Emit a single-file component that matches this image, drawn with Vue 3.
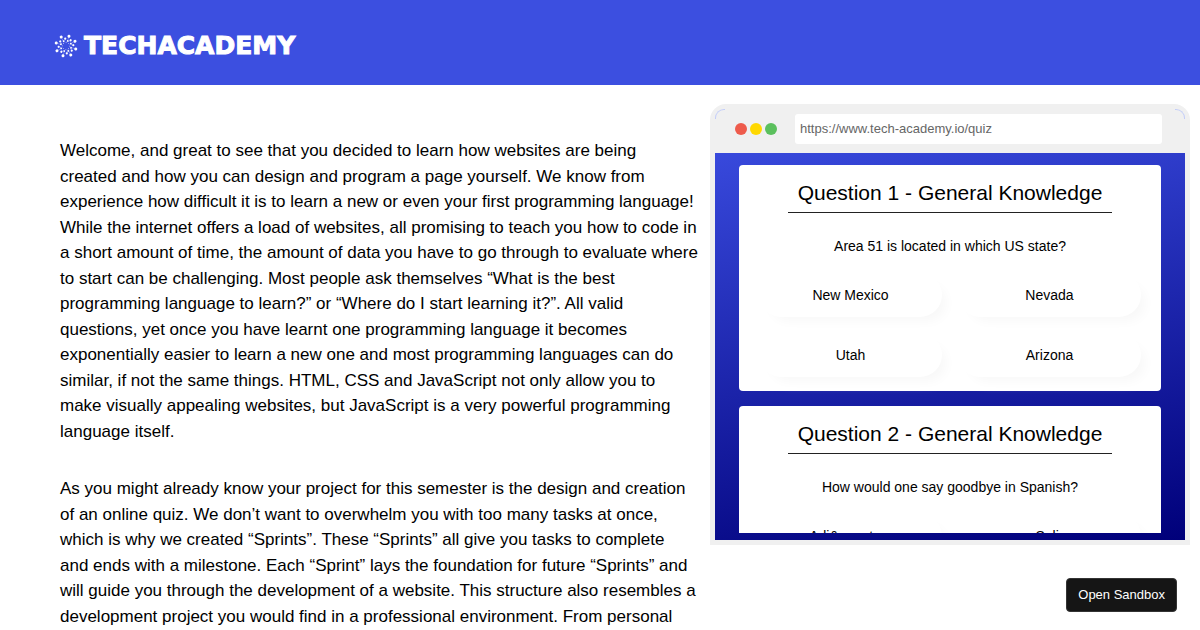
<template>
  <div class="page">
    <header class="topbar">
      <a class="logo" href="#" aria-label="TechAcademy">
        <svg class="logo-mark" viewBox="-12 -12 24 24" aria-hidden="true">
          <g v-for="n in 8" :key="n" :transform="`rotate(${n * 45 + 17})`">
            <path d="M0 -4V-9.6M-2.8 -4L-3 -7" />
            <circle cx="0" cy="-10.2" r="1.5" />
            <circle cx="-2.9" cy="-6.8" r="1.1" />
            <circle cx="0.2" cy="-5.4" r="0.9" />
            <circle cx="-1" cy="-3.6" r="0.4" />
          </g>
        </svg>
        <span class="logo-text">TECHACADEMY</span>
      </a>
    </header>

    <main class="content">
      <article class="intro">
        <p v-for="(text, index) in paragraphs" :key="index">{{ text }}</p>
      </article>

      <section class="browser">
        <div class="browser-bar">
          <div class="dots">
            <span class="dot red"></span>
            <span class="dot yellow"></span>
            <span class="dot green"></span>
          </div>
          <input v-model="url" class="address" type="text" aria-label="Address" />
        </div>
        <div class="screen">
          <div class="quiz">
            <div class="card" v-for="question in questions" :key="question.title">
              <h2>{{ question.title }}</h2>
              <p class="question">{{ question.text }}</p>
              <div class="answers">
                <button v-for="answer in question.answers" :key="answer" type="button">{{ answer }}</button>
              </div>
            </div>
          </div>
        </div>
      </section>
    </main>

    <button class="sandbox" type="button">Open Sandbox</button>
  </div>
</template>

<script setup>
import { ref } from 'vue'

const url = ref('https://www.tech-academy.io/quiz')

const paragraphs = [
  'Welcome, and great to see that you decided to learn how websites are being\ncreated and how you can design and program a page yourself. We know from experience how difficult it is to learn a new or even your first programming language! While the internet offers a load of websites, all promising to teach you how to code in a short amount of time, the amount of data you have to go through to evaluate where to start can be challenging. Most people ask themselves “What is the best programming language to learn?” or “Where do I start learning it?”. All valid questions, yet once you have learnt one programming language it becomes exponentially easier to learn a new one and most programming languages can do similar, if not the same things. HTML, CSS and JavaScript not only allow you to\nmake visually appealing websites, but JavaScript is a very powerful programming language itself.',
  'As you might already know your project for this semester is the design and creation of an online quiz. We don’t want to overwhelm you with too many tasks at once, which is why we created “Sprints”. These “Sprints” all give you tasks to complete\nand ends with a milestone. Each “Sprint” lays the foundation for future “Sprints” and will guide you through the development of a website. This structure also resembles a development project you would find in a professional environment. From personal'
]

const questions = [
  {
    title: 'Question 1 - General Knowledge',
    text: 'Area 51 is located in which US state?',
    answers: ['New Mexico', 'Nevada', 'Utah', 'Arizona']
  },
  {
    title: 'Question 2 - General Knowledge',
    text: 'How would one say goodbye in Spanish?',
    answers: ['Adi&oacute;s', 'Salir']
  }
]
</script>

<style>
body {
  margin: 0;
  background: #fff;
}
</style>

<style scoped>
.page {
  height: 100vh;
  overflow: hidden;
  color: #000;
  font-family: "Liberation Sans", Helvetica, Arial, sans-serif;
}
.page * {
  box-sizing: border-box;
}
.topbar {
  display: flex;
  align-items: center;
  height: 85px;
  padding: 6px 54px 0;
  background: #3c4fe0;
}
.logo {
  display: flex;
  align-items: center;
  gap: 6px;
  color: #fff;
  text-decoration: none;
}
.logo-mark {
  width: 24px;
  height: 24px;
  fill: #fff;
}
.logo-mark path {
  fill: none;
  stroke: #fff;
  stroke-width: 0.5;
  opacity: 0.5;
}
.logo-text {
  font-family: "DejaVu Sans", sans-serif;
  font-size: 25px;
  font-weight: bold;
  line-height: 32px;
  -webkit-text-stroke: 1px #fff;
}
.content {
  display: flex;
  align-items: flex-start;
}
.intro {
  flex: 1;
  min-width: 0;
  padding: 53px 10px 0 60px;
  font-size: 17px;
  line-height: 1.5;
}
.intro p {
  margin: 0 0 32px;
  white-space: pre-line;
}
.browser {
  position: relative;
  width: 40%;
  margin: 19px 10px 0 0;
  border: 5px solid #f0f0f0;
  border-radius: 16px 16px 0 0;
  background: #f0f0f0;
}
.browser::before,
.browser::after {
  content: '';
  position: absolute;
  top: 0;
  width: 9px;
  height: 9px;
  border-top: 1px solid #c3cdf8;
}
.browser::before {
  left: 0;
  border-left: 1px solid #c3cdf8;
  border-top-left-radius: 9px;
}
.browser::after {
  right: 0;
  border-right: 1px solid #c3cdf8;
  border-top-right-radius: 9px;
}
.browser-bar {
  display: flex;
  align-items: center;
  gap: 18px;
  height: 44px;
  padding: 0 23px 4px 20px;
}
.dots {
  display: flex;
  gap: 3px;
}
.dot {
  width: 12px;
  height: 12px;
  border-radius: 50%;
}
.red {
  background: #ee5b4c;
}
.yellow {
  background: #ffd800;
}
.green {
  background: #5bc05d;
}
.address {
  flex: 1;
  min-width: 0;
  height: 30px;
  padding: 0 5px 2px;
  border: 0;
  border-radius: 3px;
  background: #fff;
  color: #666;
  font-family: inherit;
  font-size: 13px;
}
.screen {
  padding: 12px 24px 7px;
  background: linear-gradient(170deg, #3849dc, #00007a);
}
.quiz {
  height: 368px;
  overflow: hidden;
}
.card {
  height: 226px;
  margin-bottom: 15px;
  padding: 14px 20px;
  border-radius: 4px;
  background: #fff;
  text-align: center;
}
.card h2 {
  margin: 0 29px;
  padding-bottom: 5px;
  border-bottom: 1px solid #222;
  font-size: 21px;
  font-weight: normal;
  line-height: 28px;
}
.question {
  margin: 22px 0 16px;
  font-size: 14px;
  line-height: 22px;
}
.answers {
  display: grid;
  grid-template-columns: 1fr 1fr;
  gap: 16px;
}
.answers button {
  height: 44px;
  border: 0;
  border-radius: 24px;
  background: #fff;
  box-shadow: 8px 8px 12px -4px #f8f8f8;
  color: #000;
  font-family: inherit;
  font-size: 14px;
}
.sandbox {
  position: fixed;
  right: 23px;
  bottom: 18px;
  height: 34px;
  padding: 0 11px 2px;
  border: 1px solid #343434;
  border-radius: 4px;
  background: #151515;
  color: #fff;
  font-family: inherit;
  font-size: 13px;
}
</style>
